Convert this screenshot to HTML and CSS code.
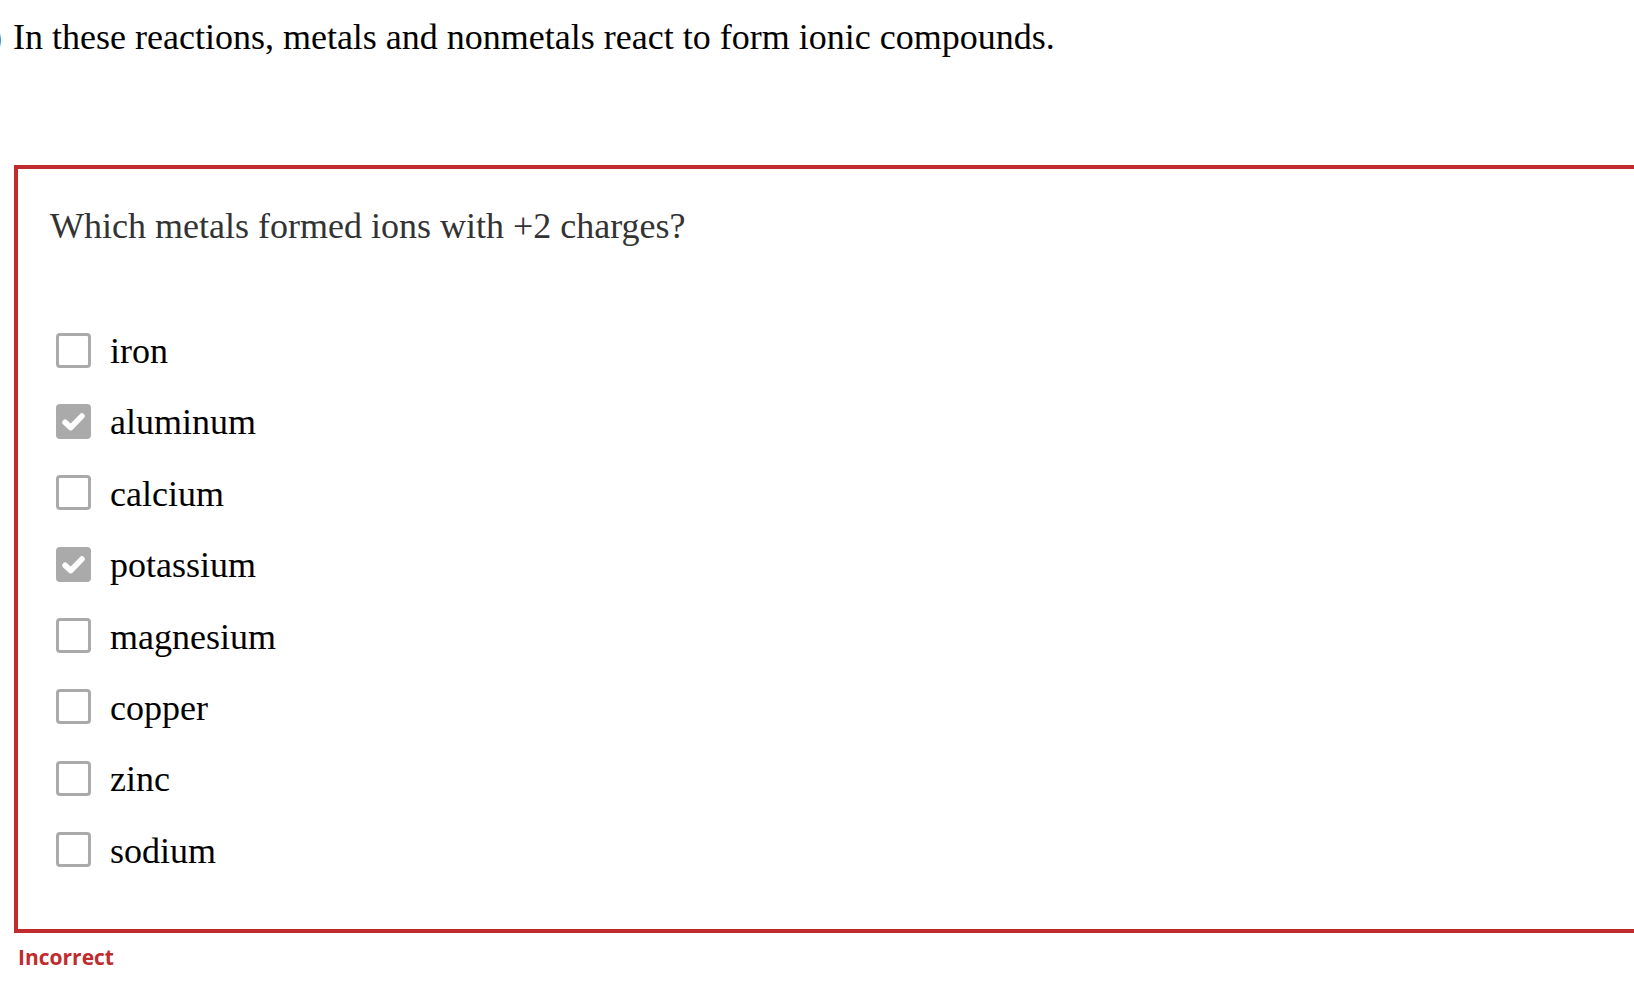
FILE: index.html
```html
<!DOCTYPE html>
<html lang="en">
<head>
<meta charset="utf-8">
<title>Quiz question</title>
<link rel="stylesheet" href="styles.css">
</head>
<body>
<p class="intro"><span class="cut">)</span> In these reactions, metals and nonmetals react to form ionic compounds.</p>
<div class="question">
  <p class="prompt">Which metals formed ions with +2 charges?</p>
  <ul class="options">
    <li class="option"><span class="box"></span><span class="label">iron</span></li>
    <li class="option"><span class="box checked"><svg class="tick" viewBox="0 0 20 20" width="27" height="27"><path d="M3.8 10.6 L8 14.5 L16.2 6" fill="none" stroke="#fff" stroke-width="4.2" stroke-linecap="round" stroke-linejoin="round"/></svg></span><span class="label">aluminum</span></li>
    <li class="option"><span class="box"></span><span class="label">calcium</span></li>
    <li class="option"><span class="box checked"><svg class="tick" viewBox="0 0 20 20" width="27" height="27"><path d="M3.8 10.6 L8 14.5 L16.2 6" fill="none" stroke="#fff" stroke-width="4.2" stroke-linecap="round" stroke-linejoin="round"/></svg></span><span class="label">potassium</span></li>
    <li class="option"><span class="box"></span><span class="label">magnesium</span></li>
    <li class="option"><span class="box"></span><span class="label">copper</span></li>
    <li class="option"><span class="box"></span><span class="label">zinc</span></li>
    <li class="option"><span class="box"></span><span class="label">sodium</span></li>
  </ul>
</div>
<div class="status">Incorrect</div>
</body>
</html>
```

FILE: styles.css
```css
html, body {
  margin: 0;
  padding: 0;
  background: #fff;
  overflow: hidden;
}

body {
  width: 1634px;
  height: 982px;
  font-family: "Liberation Serif", "Times New Roman", serif;
}

.intro {
  margin: 0;
  padding-top: 17px;
  padding-left: 3px;
  font-size: 36px;
  line-height: 40px;
  color: #000;
  white-space: nowrap;
}

.cut {
  margin-left: -13px;
  margin-right: 2px;
}

.question {
  margin-top: 108px;
  margin-left: 14px;
  width: 1700px;
  border: 4px solid #c02b2e;
  padding: 37px 0 59px 32px;
  box-sizing: border-box;
}

.prompt {
  margin: 0;
  font-size: 36px;
  line-height: 40px;
  color: #333;
}

.options {
  list-style: none;
  margin: 84px 0 0 0;
  padding: 0 0 0 6px;
  display: flex;
  flex-direction: column;
  gap: 31.4px;
}

.option {
  display: flex;
  align-items: center;
  height: 40px;
  gap: 19px;
}

.box {
  width: 35px;
  height: 35px;
  box-sizing: border-box;
  border: 3px solid #aaa;
  border-radius: 4px;
  background: #fff;
  display: flex;
  align-items: center;
  justify-content: center;
  flex: none;
}

.box.checked {
  background: #aaa;
}

.tick {
  flex: none;
  display: block;
}

.label {
  font-size: 36px;
  line-height: 40px;
  color: #000;
  position: relative;
  top: 1px;
}

.status {
  margin: 9px 0 0 18px;
  font-family: "Open Sans", "Liberation Sans", sans-serif;
  font-weight: 700;
  font-size: 21px;
  line-height: 30px;
  color: #c02b2e;
}
```
